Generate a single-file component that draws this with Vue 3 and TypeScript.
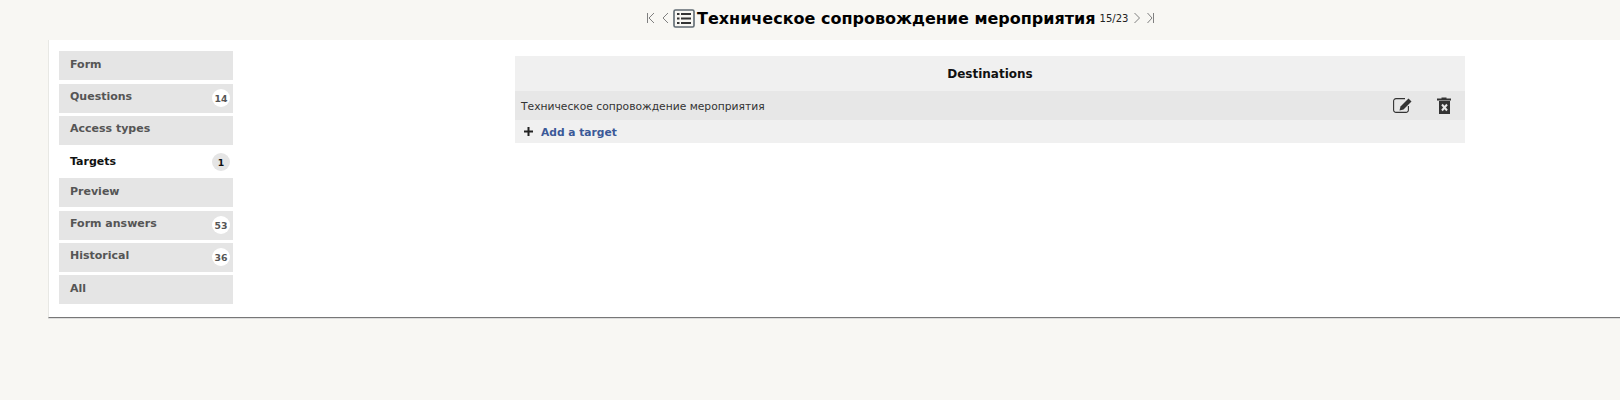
<template>
  <div class="page">
    <header class="topbar">
      <svg class="nav first" width="9" height="10" viewBox="0 0 9 10"><path d="M1.500 0v10M8 0 3 5l5 5" /></svg>
      <svg class="nav prev" width="7" height="10" viewBox="0 0 7 10"><path d="M6 0 1 5l5 5" /></svg>
      <svg class="list-icon" width="22" height="19" viewBox="0 0 22 19">
        <rect x="1" y="1" width="20" height="17" rx="1.500" />
        <path d="M4 5h2.500M8 5h10M4 9.500h2.500M8 9.500h10M4 14h2.500M8 14h10" />
      </svg>
      <h1 class="title">{{ title }}</h1>
      <span class="counter">15/23</span>
      <svg class="nav next" width="8" height="10" viewBox="0 0 8 10"><path d="M1.500 0l5 5-5 5" /></svg>
      <svg class="nav last" width="7" height="10" viewBox="0 0 7 10"><path d="M.5 0l4.500 5-4.500 5M6.500 0v10" /></svg>
    </header>

    <main class="panel">
      <nav class="tabs">
        <a v-for="tab in tabs" :key="tab.label" class="tab" :class="{ active: tab.active }">
          <span>{{ tab.label }}</span>
          <b v-if="tab.count" class="badge">{{ tab.count }}</b>
        </a>
      </nav>

      <section class="content">
        <div class="table">
          <div class="table-head">Destinations</div>
          <div class="row">
            <span class="row-text">{{ title }}</span>
            <span class="actions">
              <svg width="19" height="15" viewBox="0 0 19 15">
                <path class="edit-box" d="M12 .6H3A2.400 2.400 0 0 0 .6 3v9A2.400 2.400 0 0 0 3 14.400h10a2.400 2.400 0 0 0 2.400-2.400V8" />
                <path class="pencil" d="M6.500 12.500 7.500 8.500 15.500.5 18.500 3.500 10.500 11.500z" />
              </svg>
              <svg class="bin-icon" width="14" height="18" viewBox="0 0 14 18">
                <path class="bin" d="M4.500 1.500h5v1H14v2H0v-2h4.500zM2 5h11v13H2z" />
                <path class="bin-cross" d="M5 8.500l5 6M10 8.500l-5 6" />
              </svg>
            </span>
          </div>
          <div class="add-row">
            <svg width="9" height="9" viewBox="0 0 9 9"><path d="M4.500 0v9M0 4.500h9" /></svg>
            <a>Add a target</a>
          </div>
        </div>
      </section>
    </main>
  </div>
</template>

<script setup lang="ts">
const title = "Техническое сопровождение мероприятия";

const tabs: { label: string; count?: number; active?: boolean }[] = [
  { label: "Form" },
  { label: "Questions", count: 14 },
  { label: "Access types" },
  { label: "Targets", count: 1, active: true },
  { label: "Preview" },
  { label: "Form answers", count: 53 },
  { label: "Historical", count: 36 },
  { label: "All" },
];
</script>

<style>
html,
body {
  background: #f8f7f3;
}
</style>

<style scoped>
.page {
  height: 400px;
  background: #f8f7f3;
  font-family: "DejaVu Sans", Verdana, sans-serif;
  font-size: 11px;
  color: #222;
  overflow: hidden;
}
.topbar {
  height: 36px;
  padding: 0 0 4px 646px;
  display: flex;
  align-items: center;
  gap: 4px;
}
.nav path {
  fill: none;
  stroke: #808080;
  stroke-width: 1;
}
.nav.first {
  margin-right: 3px;
}
.nav.next {
  margin-left: 1px;
  margin-right: 1px;
}
.nav.last {
  margin-left: 1px;
}
.list-icon {
  margin-right: -2px;
}
.list-icon rect {
  fill: none;
  stroke: #5f6a72;
  stroke-width: 1.600;
}
.list-icon path {
  fill: none;
  stroke: #333;
  stroke-width: 2;
}
.title {
  margin: 0;
  font-size: 16px;
  font-weight: 700;
  color: #000;
  white-space: nowrap;
}
.counter {
  font-size: 10px;
  color: #222;
}
.panel {
  margin-left: 48px;
  height: 278px;
  box-sizing: border-box;
  padding: 11px 0 0 10px;
  background: #fff;
  border-left: 1px solid #e8e8e4;
  border-bottom: 1px solid #777;
  box-shadow: 0 1px 0 #ddd;
  display: flex;
}
.tabs {
  width: 174px;
  display: flex;
  flex-direction: column;
  flex-shrink: 0;
}
.tab {
  position: relative;
  height: 29px;
  margin-bottom: 3px;
  box-sizing: border-box;
  padding: 7px 11px 0;
  background: #e5e5e5;
  color: #555;
  font-weight: 700;
}
.tab:nth-child(4n + 1) {
  margin-bottom: 4px;
}
.tab:nth-child(4n + 2),
.tab:nth-child(4n + 3) {
  padding-top: 6px;
}
.tab.active {
  height: 30px;
  margin-bottom: 0;
  background: #fff;
  color: #111;
}
.badge {
  position: absolute;
  top: 5px;
  right: 3px;
  width: 18px;
  height: 18px;
  border-radius: 50%;
  background: #fff;
  font-size: 9.300px;
  line-height: 19px;
  text-align: center;
}
.tab.active .badge {
  background: #e5e5e5;
}
.content {
  flex: 1;
  padding: 5px 155px 0 282px;
}
.table {
  background: #f0f0f0;
}
.table-head {
  height: 35px;
  line-height: 37px;
  text-align: center;
  font-size: 12px;
  font-weight: 700;
  color: #111;
}
.row {
  height: 29px;
  padding-left: 6px;
  background: #e7e7e7;
  display: flex;
  align-items: center;
  justify-content: space-between;
  color: #333;
}
.row-text {
  padding-top: 2px;
  font-size: 10.730px;
}
.actions {
  display: flex;
  align-items: center;
  gap: 25px;
  padding-right: 14px;
}
.edit-box {
  fill: none;
  stroke: #333;
  stroke-width: 1.100;
}
.pencil,
.bin {
  fill: #333;
}
.bin-icon {
  margin-top: -2px;
}
.bin-cross {
  fill: none;
  stroke: #e7e7e7;
  stroke-width: 2;
}
.add-row {
  height: 23px;
  padding-left: 9px;
  display: flex;
  align-items: center;
  gap: 8px;
}
.add-row path {
  stroke: #222;
  stroke-width: 2;
}
.add-row a {
  padding-top: 2px;
  font-size: 10.700px;
  font-weight: 700;
  color: #3b5998;
}
</style>
